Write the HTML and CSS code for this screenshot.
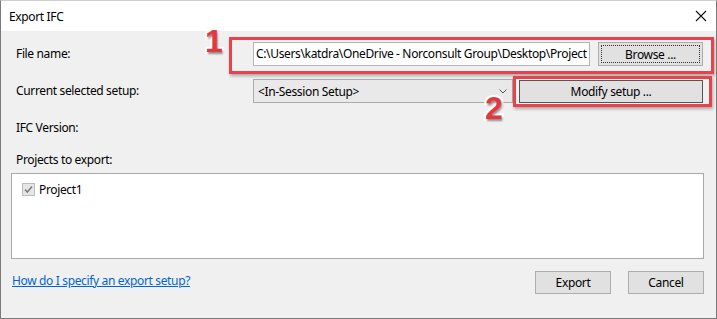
FILE: index.html
```
<!DOCTYPE html>
<html>
<head>
<meta charset="utf-8">
<link rel="stylesheet" href="styles.css">
</head>
<body>
<div class="window">
  <div class="titlebar">
    <span class="title">Export IFC</span>
    <svg class="close" width="12" height="12" viewBox="0 0 12 12"><path d="M1 1L11 11M11 1L1 11" stroke="#111" stroke-width="1.1" fill="none"/></svg>
  </div>
  <div class="content">
    <div class="row">
      <div class="label">File name:</div>
      <div class="textbox">C:\Users\katdra\OneDrive - Norconsult Group\Desktop\Project</div>
      <div class="btn browse"><span class="focus">Browse ...</span></div>
    </div>
    <div class="row">
      <div class="label">Current selected setup:</div>
      <div class="combo"><span>&lt;In-Session Setup&gt;</span>
        <svg width="8" height="5" viewBox="0 0 8 5"><path d="M0.5 0.5L4 4L7.5 0.5" stroke="#555" stroke-width="1" fill="none"/></svg>
      </div>
      <div class="btn modify">Modify setup ...</div>
    </div>
    <div class="row">
      <div class="label">IFC Version:</div>
    </div>
    <div class="label sub">Projects to export:</div>
    <div class="listbox">
      <div class="item">
        <svg width="13" height="13" viewBox="0 0 13 13"><rect x="0.5" y="0.5" width="12" height="12" fill="#e6e6e6" stroke="#bcbcbc"/><path d="M3 6.5L5.3 9L10 3.5" stroke="#7a7a7a" stroke-width="1.5" fill="none"/></svg>
        <span>Project1</span>
      </div>
    </div>
    <div class="footer">
      <a class="link" href="#">How do I specify an export setup?</a>
      <div class="buttons">
        <div class="btn action">Export</div>
        <div class="btn action">Cancel</div>
      </div>
    </div>
  </div>
  <div class="mark box1"></div>
  <div class="mark box2"></div>
  <div class="num n1">1</div>
  <div class="num n2">2</div>
</div>
</body>
</html>
```
FILE: styles.css
```
html, body { margin: 0; padding: 0; }
body {
  font-family: "Noto Sans", "Open Sans", sans-serif;
  font-size: 12px;
  letter-spacing: -0.35px;
  color: #000;
  background: #fff;
}
.window {
  position: relative;
  width: 717px;
  height: 319px;
  box-sizing: border-box;
  border: 1px solid #7a7a7a;
  border-top-color: #cfcfcf;
  display: flex;
  flex-direction: column;
  overflow: hidden;
}
.titlebar {
  height: 30px;
  background: #fff;
  display: flex;
  align-items: center;
  justify-content: space-between;
  padding: 0 9px 0 8px;
  flex: none;
}
.title { font-size: 12px; }
.content {
  flex: 1;
  background: #f0f0f0;
  padding: 11px 12px 0 10px;
  display: flex;
  flex-direction: column;
}
.row {
  display: flex;
  align-items: center;
  height: 24px;
  margin-bottom: 13px;
}
.label {
  width: 237px;
  padding-left: 5px;
  flex: none;
  line-height: 16px;
}
.label.sub { margin-top: -1px; }
.textbox {
  width: 337px;
  height: 24px;
  box-sizing: border-box;
  border: 1px solid #b4b4b4;
  background: #fff;
  padding: 0 2px;
  line-height: 22px;
  white-space: nowrap;
  overflow: hidden;
}
.btn {
  box-sizing: border-box;
  background: #e1e1e1;
  border: 1px solid #adadad;
  display: flex;
  align-items: center;
  justify-content: center;
}
.browse {
  width: 105px;
  height: 24px;
  margin-left: 8px;
  padding: 2px;
}
.browse .focus {
  flex: 1;
  align-self: stretch;
  border: 1px dotted #333;
  display: flex;
  align-items: center;
  justify-content: center;
}
.combo {
  width: 260px;
  height: 24px;
  box-sizing: border-box;
  border: 1px solid #acacac;
  background: #e9e9e9;
  display: flex;
  align-items: center;
  justify-content: space-between;
  padding: 0 5px 0 4px;
}
.modify {
  width: 184px;
  height: 23px;
  margin-left: 6px;
  border-color: #555;
}
.listbox {
  margin-top: 5px;
  height: 86px;
  box-sizing: border-box;
  border: 1px solid #a8a8a8;
  background: #fff;
  padding: 7px 0 0 10px;
}
.item {
  display: flex;
  align-items: center;
  gap: 4px;
}
.footer {
  display: flex;
  justify-content: space-between;
  align-items: flex-start;
  margin-top: 12px;
}
.link {
  color: #0066cc;
  text-decoration: underline;
  margin-left: 1px;
  margin-top: 1px;
}
.buttons {
  display: flex;
  gap: 17px;
}
.action {
  width: 76px;
  height: 23px;
}
.mark {
  position: absolute;
  border: 3px solid #e8434b;
  box-shadow: 1px 2px 3px rgba(0,0,0,0.3);
}
.box1 { left: 228px; top: 36px; width: 479px; height: 31px; }
.box2 { left: 512px; top: 75px; width: 193px; height: 25px; }
.num {
  position: absolute;
  font-family: "Liberation Sans", Arial, sans-serif;
  font-weight: bold;
  letter-spacing: 0;
  font-size: 32px;
  line-height: 32px;
  color: #e2383f;
  -webkit-text-stroke: 4px #fff;
  paint-order: stroke fill;
  text-shadow: 1px 2px 2px rgba(0,0,0,0.45);
}
.n1 { left: 204px; top: 24px; }
.n2 { left: 484px; top: 91px; }
```
